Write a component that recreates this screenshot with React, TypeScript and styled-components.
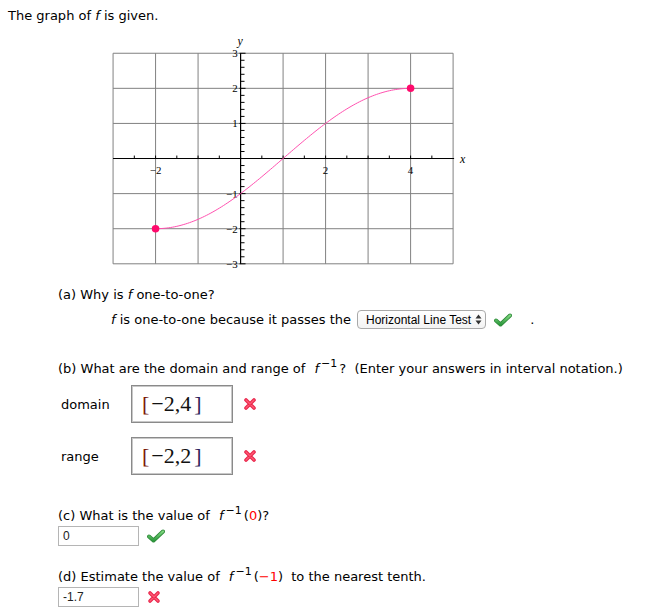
import React from "react";
import styled, { createGlobalStyle } from "styled-components";

const GlobalStyle = createGlobalStyle`
  body {
    margin: 0;
    background: #fff;
    color: #000;
    font-family: "DejaVu Sans", Verdana, sans-serif;
    font-size: 13px;
  }
`;

// graph geometry (px per unit)
const UX = 43;
const UY = 35.5;
const OX = 140;
const OY = 128;
const px = (u: number) => OX + UX * u;
const py = (v: number) => OY - UY * v;
const f = (x: number) => 2 * Math.sin((Math.PI * (x - 1)) / 6);

const range = (a: number, b: number, step: number) => {
  const out: number[] = [];
  for (let v = a; v <= b + 1e-9; v += step) out.push(Math.round(v * 100) / 100);
  return out;
};

const Graph = () => {
  const curve = range(-2, 4, 0.05)
    .map((x, i) => `${i === 0 ? "M" : "L"}${px(x).toFixed(2)} ${py(f(x)).toFixed(2)}`)
    .join(" ");
  return (
    <GraphSvg width={380} height={240} viewBox="0 0 380 240">
      {range(-3, 5, 1).map((u) => (
        <line key={"gx" + u} x1={px(u)} y1={py(3)} x2={px(u)} y2={py(-3)} stroke="#808080" strokeWidth={1} />
      ))}
      {range(-3, 3, 1).map((v) => (
        <line key={"gy" + v} x1={px(-3)} y1={py(v)} x2={px(5)} y2={py(v)} stroke="#808080" strokeWidth={1} />
      ))}
      <line x1={px(-3)} y1={py(0)} x2={px(5) + 1} y2={py(0)} stroke="#000" strokeWidth={1.2} />
      <line x1={px(0)} y1={py(3)} x2={px(0)} y2={py(-3)} stroke="#000" strokeWidth={1.2} />
      {range(-3, 3, 0.2).map((v) => {
        const major = Math.abs(v - Math.round(v)) < 1e-6;
        return (
          <line
            key={"ty" + v}
            x1={px(0) - (major ? 1 : 0)}
            y1={py(v)}
            x2={px(0) + (major ? 5 : 4)}
            y2={py(v)}
            stroke="#000"
            strokeWidth={1}
          />
        );
      })}
      {range(-2.5, 4.5, 0.5).map((u) => (
        <line key={"tx" + u} x1={px(u)} y1={py(0)} x2={px(u)} y2={py(0) - 3} stroke="#000" strokeWidth={1} />
      ))}
      {[3, 2, 1, -1, -2, -3].map((v) => (
        <AxisText key={"ly" + v} x={px(0) - 3} y={py(v) + 4} textAnchor="end">
          {v < 0 ? `\u2212${-v}` : v}
        </AxisText>
      ))}
      {[-2, 2, 4].map((u) => (
        <AxisText key={"lx" + u} x={px(u)} y={py(0) + 16} textAnchor="middle">
          {u < 0 ? `\u2212${-u}` : u}
        </AxisText>
      ))}
      <AxisLabel x={px(0) - 3} y={13}>y</AxisLabel>
      <AxisLabel x={px(5) + 7} y={py(0) + 5}>x</AxisLabel>
      <path d={curve} fill="none" stroke="#ff4fae" strokeWidth={1} />
      <circle cx={px(-2)} cy={py(-2)} r={3.8} fill="#ff0a6c" />
      <circle cx={px(4)} cy={py(2)} r={3.8} fill="#ff0a6c" />
    </GraphSvg>
  );
};

const Check = () => (
  <Icon width={18} height={14} viewBox="0 0 18 14">
    <defs>
      <linearGradient id="ck" x1="0" y1="0" x2="0" y2="1">
        <stop offset="0" stopColor="#7fd77f" />
        <stop offset="1" stopColor="#2e9a3e" />
      </linearGradient>
    </defs>
    <path d="M2 7.5 L6.5 11.5 L16 2.5" fill="none" stroke="#2f8a3a" strokeWidth={4} strokeLinecap="round" strokeLinejoin="round" />
    <path d="M2 7.5 L6.5 11.5 L16 2.5" fill="none" stroke="url(#ck)" strokeWidth={2.4} strokeLinecap="round" strokeLinejoin="round" />
  </Icon>
);

const Cross = () => (
  <Icon width={14} height={14} viewBox="0 0 14 14">
    <path d="M3 3 L11 11 M11 3 L3 11" fill="none" stroke="#e8244a" strokeWidth={3.6} strokeLinecap="round" />
    <path d="M3 3 L11 11 M11 3 L3 11" fill="none" stroke="#ff5a74" strokeWidth={1.4} strokeLinecap="round" />
  </Icon>
);

const FInv = () => (
  <InvWrap>
    <Fn>f</Fn>
    <Sup>{"\u22121"}</Sup>
  </InvWrap>
);

const Interval = ({ a, b }: { a: string; b: string }) => (
  <MathBox>
    <LBracket>[</LBracket>
    {"\u2212"}
    {a},{b}
    <RBracket>]</RBracket>
  </MathBox>
);

const App = () => {
  return (
    <Page>
      <GlobalStyle />
      <Intro>
        The graph of <Fn>f</Fn> is given.
      </Intro>
      <Graph />

      <Question $top={18}>
        (a) Why is <Fn>f</Fn> one-to-one?
      </Question>
      <AnswerLine>
        <span>
          <Fn>f</Fn> is one-to-one because it passes the
        </span>
        <Select>
          Horizontal Line Test
          <Spinner width={7} height={11} viewBox="0 0 7 11">
            <path d="M3.5 0.5 L6.5 4.5 L0.5 4.5 Z M3.5 10.5 L6.5 6.5 L0.5 6.5 Z" fill="#333" />
          </Spinner>
        </Select>
        <Check />
        <Period>.</Period>
      </AnswerLine>

      <Question $top={31}>
        (b) What are the domain and range of <FInv />?&nbsp; (Enter your answers in interval notation.)
      </Question>
      <FieldRow $top={8}>
        <FieldLabel>domain</FieldLabel>
        <Interval a="2" b="4" />
        <Cross />
      </FieldRow>
      <FieldRow $top={14}>
        <FieldLabel>range</FieldLabel>
        <Interval a="2" b="2" />
        <Cross />
      </FieldRow>

      <Question $top={33}>
        (c) What is the value of <FInv />(<Red>0</Red>)?
      </Question>
      <InputRow>
        <TextInput>0</TextInput>
        <Check />
      </InputRow>

      <Question $top={23}>
        (d) Estimate the value of <FInv />(<Red>{"\u22121"}</Red>)&nbsp; to the nearest tenth.
      </Question>
      <InputRow>
        <TextInput>-1.7</TextInput>
        <Cross />
      </InputRow>
    </Page>
  );
};

export default App;

const Page = styled.div`
  width: 661px;
  height: 615px;
  padding: 8px;
  box-sizing: border-box;
  display: flex;
  flex-direction: column;
  overflow: hidden;
`;

const Intro = styled.div`
  line-height: 16px;
`;

const GraphSvg = styled.svg`
  display: block;
  margin: 8px 0 0 92px;
`;

const AxisText = styled.text`
  font-family: "Liberation Serif", "DejaVu Serif", serif;
  font-size: 11px;
  fill: #000;
`;

const AxisLabel = styled.text`
  font-family: "Liberation Serif", "DejaVu Serif", serif;
  font-style: italic;
  font-size: 12px;
  fill: #000;
`;

const Fn = styled.span`
  font-style: italic;
`;

const InvWrap = styled.span`
  margin: 0 2px 0 5px;
`;

const Sup = styled.sup`
  font-size: 11px;
  margin-left: 2px;
  vertical-align: 6px;
  line-height: 0;
`;

const Red = styled.span`
  color: #ff0000;
`;

const Question = styled.div<{ $top: number }>`
  margin: ${(p) => p.$top}px 0 0 50px;
  line-height: 16px;
  white-space: nowrap;
`;

const AnswerLine = styled.div`
  display: flex;
  align-items: center;
  margin: 6px 0 0 103px;
  height: 21px;
  white-space: nowrap;
`;

const Select = styled.div`
  display: flex;
  align-items: center;
  gap: 4px;
  height: 19px;
  box-sizing: border-box;
  margin-left: 6px;
  padding: 0 3px 0 8px;
  border: 1px solid #a9a9a9;
  border-radius: 4px;
  background: linear-gradient(#fff, #f3f3f3);
  font-family: "Liberation Sans", Arial, sans-serif;
  font-size: 12px;
`;

const Spinner = styled.svg`
  display: block;
`;

const Icon = styled.svg`
  display: block;
  margin-left: 8px;
  flex-shrink: 0;
`;

const Period = styled.span`
  margin-left: 18px;
`;

const FieldRow = styled.div<{ $top: number }>`
  display: flex;
  align-items: center;
  margin: ${(p) => p.$top}px 0 0 53px;
  height: 38px;
`;

const FieldLabel = styled.div`
  width: 70px;
`;

const MathBox = styled.div`
  width: 102px;
  height: 38px;
  box-sizing: border-box;
  border: 1px solid #8a8a8a;
  box-shadow: inset 0 0 0 1px #c8c8c8;
  display: flex;
  align-items: center;
  padding-left: 10px;
  font-family: "Liberation Serif", "DejaVu Serif", serif;
  font-size: 22px;
  color: #111;
  margin-right: 2px;
`;

const LBracket = styled.span`
  color: #7a1a0a;
  margin-right: 2px;
`;

const RBracket = styled.span`
  color: #2c1d5a;
  margin-left: 3px;
`;

const InputRow = styled.div`
  display: flex;
  align-items: center;
  margin: 2px 0 0 50px;
`;

const TextInput = styled.div`
  width: 81px;
  height: 20px;
  box-sizing: border-box;
  border: 1px solid #b5b5b5;
  padding: 0 4px;
  display: flex;
  align-items: center;
  font-family: "Liberation Sans", Arial, sans-serif;
  font-size: 12px;
  color: #222;
`;
